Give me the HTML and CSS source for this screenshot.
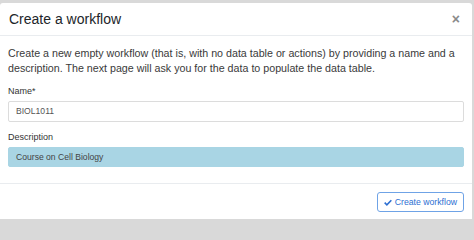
FILE: index.html
```html
<!DOCTYPE html>
<html>
<head>
<meta charset="utf-8">
<link rel="stylesheet" href="styles.css">
</head>
<body>
<div class="modal">
  <div class="modal-header">
    <h5 class="modal-title">Create a workflow</h5>
    <span class="close">&times;</span>
  </div>
  <div class="modal-body">
    <p class="intro">Create a new empty workflow (that is, with no data table or actions) by providing a name and a description. The next page will ask you for the data to populate the data table.</p>
    <label class="field-label">Name*</label>
    <div class="input">BIOL1011</div>
    <label class="field-label">Description</label>
    <div class="input input-hl">Course on Cell Biology</div>
  </div>
  <div class="modal-footer">
    <button class="btn"><svg class="check" viewBox="0 0 12 10" width="8" height="7"><path d="M1 5.2 L4.3 8.4 L11 1.6" fill="none" stroke="currentColor" stroke-width="2.4"/></svg>Create workflow</button>
  </div>
</div>
</body>
</html>
```
FILE: styles.css
```css
html, body {
  margin: 0;
  padding: 0;
  height: 219px;
  overflow: hidden;
}
body {
  background: #d9d9d9;
  font-family: "Liberation Sans", Arial, sans-serif;
  color: #333;
}
.modal {
  margin-top: 3px;
  width: 472px;
  height: 216px;
  background: #fff;
  border-radius: 3px 3px 0 0;
  display: flex;
  flex-direction: column;
}
.modal-header {
  height: 32px;
  flex: none;
  padding: 0 9px;
  display: flex;
  align-items: center;
  justify-content: space-between;
  border-bottom: 1px solid #e9ecef;
}
.modal-title {
  margin: 0;
  font-size: 14px;
  font-weight: 500;
  color: #212529;
}
.close {
  font-size: 14px;
  font-weight: bold;
  color: #8a8a8a;
  line-height: 1;
  margin-right: 3px;
}
.modal-body {
  padding: 10px 8px 16px 8px;
  display: flex;
  flex-direction: column;
}
.intro {
  margin: 0 0 8px 0;
  font-size: 10.7px;
  line-height: 15px;
  color: #3a3a3a;
}
.field-label {
  font-size: 9px;
  line-height: 14px;
  color: #333;
  margin-bottom: 3px;
}
.input {
  height: 19px;
  border: 1px solid #dcdcdc;
  border-radius: 2px;
  padding: 0 7px;
  font-size: 8.6px;
  line-height: 19px;
  color: #555;
  margin-bottom: 8px;
}
.input-hl {
  background: #a9d5e4;
  border-color: #a9d5e4;
  color: #444;
  height: 18px;
  line-height: 18px;
  margin-bottom: 0;
}
.modal-footer {
  border-top: 1px solid #e9ecef;
  padding: 8px 8px 0 8px;
  display: flex;
  justify-content: flex-end;
}
.btn {
  height: 20px;
  padding: 0 6px;
  border: 1px solid #6fa3e6;
  border-radius: 3px;
  background: #fff;
  color: #2d6fd2;
  font-family: "Liberation Sans", Arial, sans-serif;
  font-size: 8.7px;
  display: flex;
  align-items: center;
  gap: 3px;
}
.check {
  display: block;
}
```
